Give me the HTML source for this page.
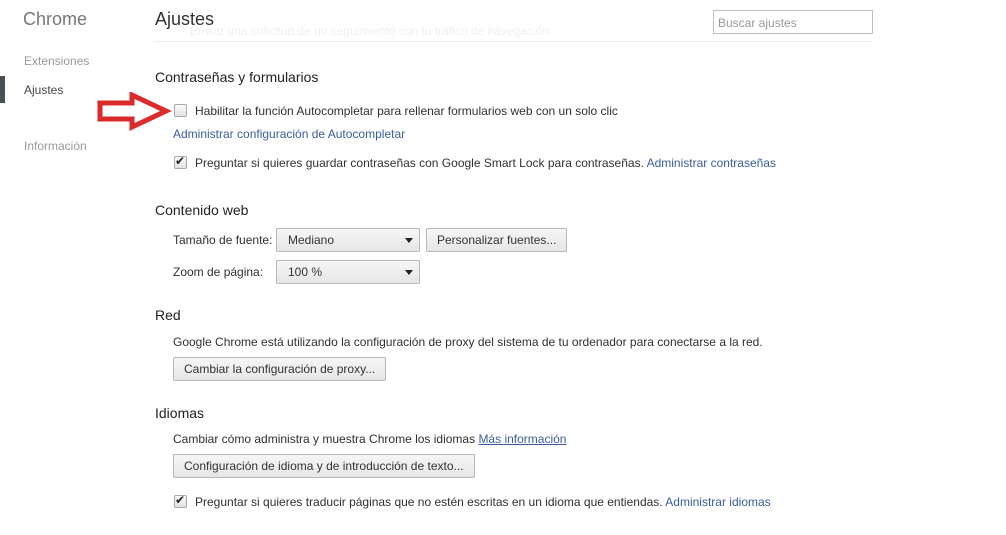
<!DOCTYPE html>
<html><head><meta charset="utf-8"><style>
body{margin:0;width:1006px;height:535px;background:#fff;font-family:"Liberation Sans",sans-serif;font-size:12px;color:#303030;position:relative;overflow:hidden}
.a{position:absolute;white-space:nowrap}
.h{font-size:14px;color:#222}
.g{color:#999}
.l{color:#3a5d9c}
.btn{position:absolute;border:1px solid #b8b8b8;border-radius:2px;background:linear-gradient(#f6f6f6,#e6e6e6);box-sizing:border-box;padding:0 10px;line-height:22px;color:#333}
.sel{position:absolute;border:1px solid #b8b8b8;border-radius:2px;background:linear-gradient(#f6f6f6,#e6e6e6);box-sizing:border-box;padding-left:11px;line-height:22px;color:#333}
.sel:after{content:"";position:absolute;right:6px;top:9px;border:4px solid transparent;border-top:5px solid #222}
.cb{position:absolute;width:11px;height:11px;border:1px solid #aaa;border-radius:2px;background:linear-gradient(#fafafa,#e2e2e2)}
</style></head><body>
<div class="a g" style="left:23px;top:9px;font-size:18px;color:#777">Chrome</div>
<div class="a g" style="left:24px;top:54px">Extensiones</div>
<div style="position:absolute;left:0;top:76px;width:5px;height:27px;background:#4b5057"></div>
<div class="a" style="left:24px;top:83px;color:#444">Ajustes</div>
<div class="a g" style="left:24px;top:139px">Información</div>
<div class="a" style="left:155px;top:9px;font-size:18px;color:#333">Ajustes</div>
<div class="a" style="left:190px;top:24px;color:#f0f0f0">Enviar una solicitud de no seguimiento con tu tráfico de navegación</div>
<div style="position:absolute;left:155px;top:41px;width:718px;height:1px;background:#eee"></div>
<div style="position:absolute;left:713px;top:10px;width:160px;height:24px;border:1px solid #bfbfbf;box-sizing:border-box;padding:5px 4px;color:#999">Buscar ajustes</div>

<div class="a h" style="left:155px;top:69px">Contraseñas y formularios</div>
<svg style="position:absolute;left:96px;top:92px" width="76" height="40"><polygon points="4,11 36,11 36,3 70,19 36,35 36,27 4,27" fill="none" stroke="#dd2a2a" stroke-width="5" stroke-linejoin="miter"/></svg>
<div class="cb" style="left:174px;top:104px"></div>
<div class="a" style="left:195px;top:104px">Habilitar la función Autocompletar para rellenar formularios web con un solo clic</div>
<div class="a l" style="left:173px;top:127px">Administrar configuración de Autocompletar</div>
<div class="cb" style="left:174px;top:156px"></div>
<div class="a" style="left:175px;top:154px;font-size:12px;color:#222">✔</div>
<div class="a" style="left:195px;top:156px">Preguntar si quieres guardar contraseñas con Google Smart Lock para contraseñas. <span class="l">Administrar contraseñas</span></div>

<div class="a h" style="left:155px;top:202px">Contenido web</div>
<div class="a" style="left:173px;top:233px">Tamaño de fuente:</div>
<div class="sel" style="left:276px;top:228px;width:144px;height:24px">Mediano</div>
<div class="btn" style="left:426px;top:228px;height:24px">Personalizar fuentes...</div>
<div class="a" style="left:173px;top:265px">Zoom de página:</div>
<div class="sel" style="left:276px;top:260px;width:144px;height:24px">100 %</div>

<div class="a h" style="left:155px;top:307px">Red</div>
<div class="a" style="left:173px;top:335px">Google Chrome está utilizando la configuración de proxy del sistema de tu ordenador para conectarse a la red.</div>
<div class="btn" style="left:173px;top:357px;height:24px">Cambiar la configuración de proxy...</div>

<div class="a h" style="left:155px;top:405px">Idiomas</div>
<div class="a" style="left:173px;top:432px">Cambiar cómo administra y muestra Chrome los idiomas <span class="l" style="text-decoration:underline">Más información</span></div>
<div class="btn" style="left:173px;top:454px;height:24px">Configuración de idioma y de introducción de texto...</div>
<div class="cb" style="left:174px;top:495px"></div>
<div class="a" style="left:175px;top:493px;font-size:12px;color:#222">✔</div>
<div class="a" style="left:195px;top:495px">Preguntar si quieres traducir páginas que no estén escritas en un idioma que entiendas. <span class="l">Administrar idiomas</span></div>
</body></html>
